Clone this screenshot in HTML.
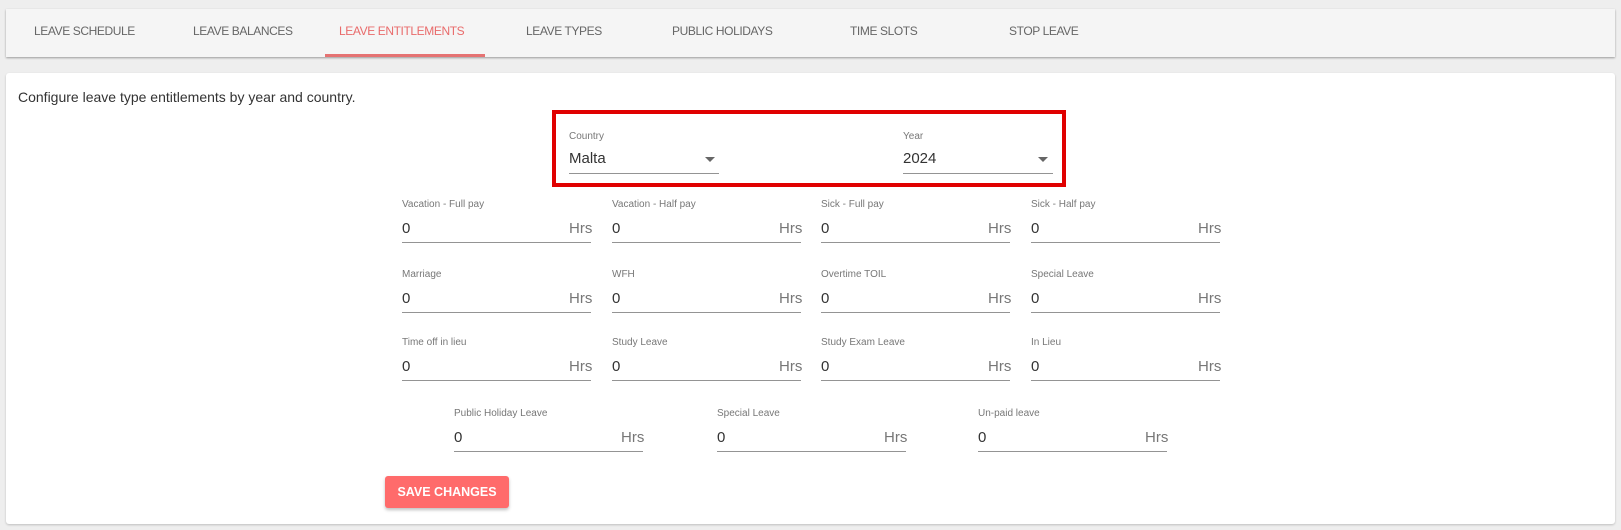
<!DOCTYPE html>
<html><head><style>
body{margin:0;width:1621px;height:530px;background:#eeeeee;font-family:"Liberation Sans",Roboto,sans-serif;position:relative;overflow:hidden}
.a{position:absolute;white-space:nowrap}
.bar{left:6px;top:9px;width:1609px;height:48px;background:#f5f5f5;box-shadow:0 1px 2px rgba(0,0,0,.35)}
.tab{top:24px;font-size:12px;color:#666;letter-spacing:-0.4px}
.card{left:6px;top:73px;width:1609px;height:451px;background:#fff;border-radius:3px;box-shadow:0 1px 2px rgba(0,0,0,.2)}
.lbl{font-size:10px;color:#777}
.val{font-size:15px;color:#333}
.hrs{font-size:15px;color:#777}
.ul{height:1px;background:#949494}
</style></head><body>
<div class="a bar"></div>
<div class="a tab" style="left:34px">LEAVE SCHEDULE</div>
<div class="a tab" style="left:193px">LEAVE BALANCES</div>
<div class="a tab" style="left:339px;color:#e96b6b">LEAVE ENTITLEMENTS</div>
<div class="a" style="left:325px;top:54px;width:160px;height:3px;background:#e57373"></div>
<div class="a tab" style="left:526px">LEAVE TYPES</div>
<div class="a tab" style="left:672px">PUBLIC HOLIDAYS</div>
<div class="a tab" style="left:850px">TIME SLOTS</div>
<div class="a tab" style="left:1009px">STOP LEAVE</div>
<div class="a card"></div>
<div class="a" style="left:18px;top:89px;font-size:14px;color:#333">Configure leave type entitlements by year and country.</div>
<div class="a" style="left:552px;top:110px;width:506px;height:69px;border:4px solid #e00000"></div>
<div class="a lbl" style="left:569px;top:131px">Country</div>
<div class="a val" style="left:569px;top:150px">Malta</div>
<div class="a" style="left:705px;top:157px;width:0;height:0;border-left:5px solid transparent;border-right:5px solid transparent;border-top:5px solid #666"></div>
<div class="a ul" style="left:569px;top:173px;width:150px"></div>
<div class="a lbl" style="left:903px;top:131px">Year</div>
<div class="a val" style="left:903px;top:150px">2024</div>
<div class="a" style="left:1038px;top:157px;width:0;height:0;border-left:5px solid transparent;border-right:5px solid transparent;border-top:5px solid #666"></div>
<div class="a ul" style="left:903px;top:173px;width:150px"></div>
<div id="f"></div>
<div class="a" style="left:385px;top:476px;width:124px;height:32px;background:#ff6b6b;border-radius:3px;box-shadow:0 2px 3px rgba(0,0,0,.25);color:#fff;font-weight:bold;font-size:12.5px;line-height:32px;text-align:center">SAVE CHANGES</div>
<script>
var rows=[[205,["Vacation - Full pay","Vacation - Half pay","Sick - Full pay","Sick - Half pay"],[402,612,821,1031]],
[275,["Marriage","WFH","Overtime TOIL","Special Leave"],[402,612,821,1031]],
[343,["Time off in lieu","Study Leave","Study Exam Leave","In Lieu"],[402,612,821,1031]],
[414,["Public Holiday Leave","Special Leave","Un-paid leave"],[454,717,978]]];
var h="";
rows.forEach(function(r){var y=r[0];r[1].forEach(function(t,i){var x=r[2][i];
h+='<div class="a lbl" style="left:'+x+'px;top:'+(y-6)+'px">'+t+'</div>'+
'<div class="a val" style="left:'+x+'px;top:'+(y+15)+'px">0</div>'+
'<div class="a hrs" style="left:'+(x+167)+'px;top:'+(y+15)+'px">Hrs</div>'+
'<div class="a ul" style="left:'+x+'px;top:'+(y+37)+'px;width:189px"></div>';});});
document.getElementById("f").innerHTML=h;
</script>
</body></html>
